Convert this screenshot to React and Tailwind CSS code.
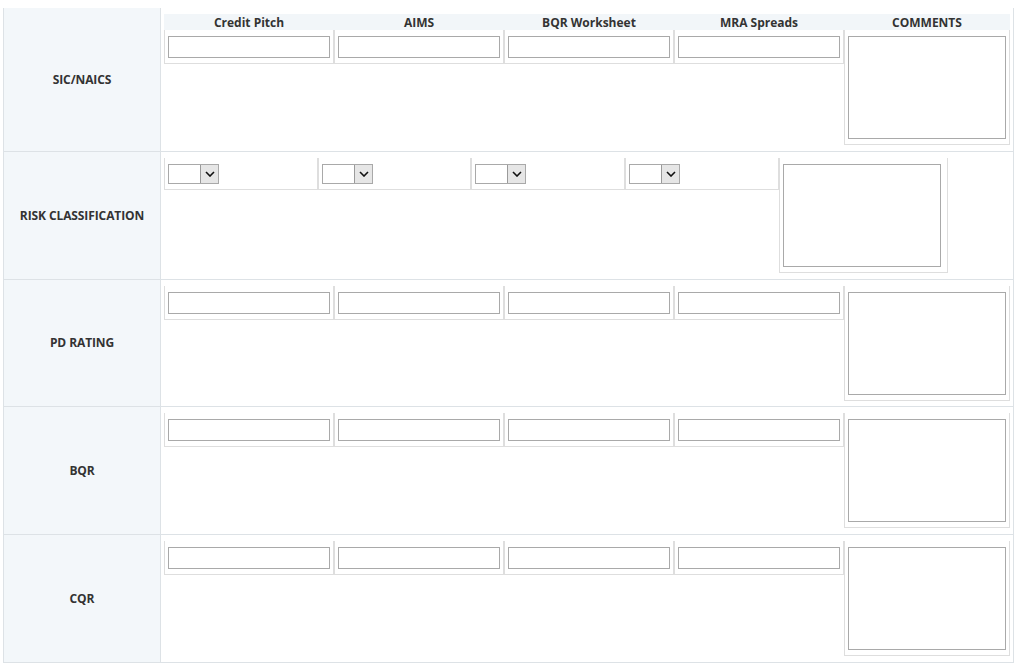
import React from 'react';

const COLUMNS = ['Credit Pitch', 'AIMS', 'BQR Worksheet', 'MRA Spreads'];

function TextCell() {
  return (
    <div className="w-[170px] border-x border-b border-[#dedede] pt-[6px] pb-[5px] px-[3px]">
      <div className="h-[22px] w-[162px] border border-[#a9a9a9] bg-white"></div>
    </div>
  );
}

function CommentCell({ className = 'w-[166px]' }) {
  return (
    <div className={`${className} border-x border-b border-[#dedede] pt-[6px] pb-[5px] px-[3px]`}>
      <div className="h-[103px] w-[158px] border border-[#a9a9a9] bg-white"></div>
    </div>
  );
}

function SelectCell({ width }) {
  return (
    <div className={`${width} border-x border-b border-[#dedede] pt-[6px] pb-[5px] px-[3px]`}>
      <div className="flex h-[20px] w-[51px] border border-[#a9a9a9] bg-white">
        <div className="flex-1"></div>
        <div className="flex w-[18px] items-center justify-center border-l border-[#9a9a9a] bg-[#e6e6e6]">
          <svg width="10" height="6" viewBox="0 0 10 6">
            <path d="M1 1 L5 5 L9 1" fill="none" stroke="#111" strokeWidth="1.6" />
          </svg>
        </div>
      </div>
    </div>
  );
}

function Row({ label, tight, children }) {
  return (
    <div className="flex border-b border-[#dde2e6]">
      <div className="flex w-[157px] shrink-0 items-center justify-center border-r border-[#dde2e6] bg-[#f3f7fa] text-[12px] font-bold tracking-[-0.1px] text-[#333]">
        {label}
      </div>
      <div className={tight ? 'flex-1 pl-[3px] pt-[6px] pb-[5px]' : 'flex-1 pl-[3px] pt-[6px] pb-[6px]'}>{children}</div>
    </div>
  );
}

function InputRow() {
  return (
    <div className="flex items-start">
      {COLUMNS.map((c) => (
        <TextCell key={c} />
      ))}
      <CommentCell />
    </div>
  );
}

export default function App() {
  return (
    <div className="min-h-[664px] bg-white pt-2 pl-[3px]" style={{ fontFamily: '"Open Sans", "Liberation Sans", sans-serif' }}>
      <div className="w-[1011px] border-x border-[#dde2e6]">
        <Row label="SIC/NAICS">
          <div className="flex h-[16px] w-[846px] bg-[#f2f6f9] text-[12px] font-bold leading-[18px] text-[#333]">
            {COLUMNS.map((c) => (
              <div key={c} className="w-[170px] text-center">{c}</div>
            ))}
            <div className="w-[166px] text-center">COMMENTS</div>
          </div>
          <InputRow />
        </Row>

        <Row label="RISK CLASSIFICATION">
          <div className="flex items-start">
            <SelectCell width="w-[154px]" />
            <SelectCell width="w-[153px]" />
            <SelectCell width="w-[154px]" />
            <SelectCell width="w-[154px]" />
            <CommentCell className="w-[169px]" />
          </div>
        </Row>

        <Row label="PD RATING" tight>
          <InputRow />
        </Row>

        <Row label="BQR">
          <InputRow />
        </Row>

        <Row label="CQR">
          <InputRow />
        </Row>
      </div>
    </div>
  );
}
